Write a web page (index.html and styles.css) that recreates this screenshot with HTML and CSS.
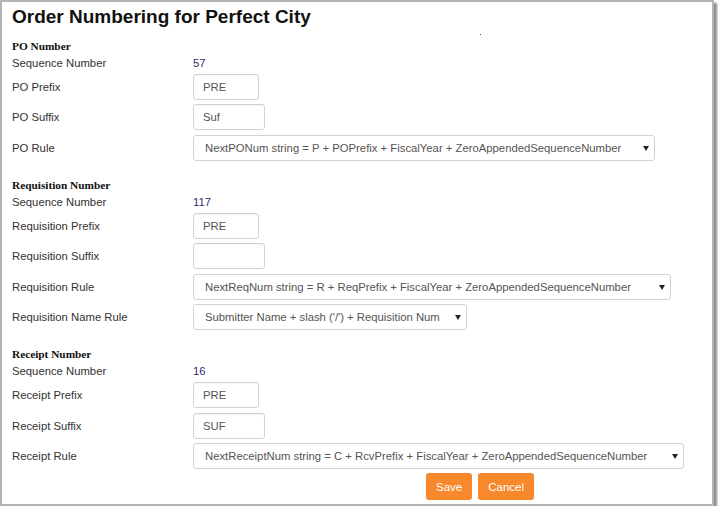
FILE: index.html
```html
<!DOCTYPE html>
<html lang="en">
<head>
    <meta charset="UTF-8">
    <title>Order Numbering</title>
    <link rel="stylesheet" href="styles.css">
</head>
<body>
    <div class="frame">
        <h1 class="title">Order Numbering for Perfect City</h1>
        <span class="speck"></span>

        <div class="section">
            <h2 class="section-title">PO Number</h2>
            <div class="row seq">
                <span class="label">Sequence Number</span>
                <span class="value">57</span>
            </div>
            <div class="row">
                <span class="label">PO Prefix</span>
                <input class="field short" type="text" value="PRE">
            </div>
            <div class="row">
                <span class="label">PO Suffix</span>
                <input class="field" type="text" value="Suf">
            </div>
            <div class="row">
                <span class="label">PO Rule</span>
                <div class="select-wrap" style="width: 462px;">
                    <select class="select">
                        <option>NextPONum string = P + POPrefix + FiscalYear + ZeroAppendedSequenceNumber</option>
                    </select>
                    <svg class="caret" width="6" height="5" viewBox="0 0 6 5"><polygon points="0,0 6,0 3,5" fill="#222"/></svg>
                </div>
            </div>
        </div>

        <div class="section">
            <h2 class="section-title">Requisition Number</h2>
            <div class="row seq">
                <span class="label">Sequence Number</span>
                <span class="value">117</span>
            </div>
            <div class="row">
                <span class="label">Requisition Prefix</span>
                <input class="field short" type="text" value="PRE">
            </div>
            <div class="row">
                <span class="label">Requisition Suffix</span>
                <input class="field" type="text" value="">
            </div>
            <div class="row">
                <span class="label">Requisition Rule</span>
                <div class="select-wrap" style="width: 478px;">
                    <select class="select">
                        <option>NextReqNum string = R + ReqPrefix + FiscalYear + ZeroAppendedSequenceNumber</option>
                    </select>
                    <svg class="caret" width="6" height="5" viewBox="0 0 6 5"><polygon points="0,0 6,0 3,5" fill="#222"/></svg>
                </div>
            </div>
            <div class="row">
                <span class="label">Requisition Name Rule</span>
                <div class="select-wrap" style="width: 274px;">
                    <select class="select">
                        <option>Submitter Name + slash ('/') + Requisition Num</option>
                    </select>
                    <svg class="caret" width="6" height="5" viewBox="0 0 6 5"><polygon points="0,0 6,0 3,5" fill="#222"/></svg>
                </div>
            </div>
        </div>

        <div class="section">
            <h2 class="section-title">Receipt Number</h2>
            <div class="row seq">
                <span class="label">Sequence Number</span>
                <span class="value">16</span>
            </div>
            <div class="row">
                <span class="label">Receipt Prefix</span>
                <input class="field short" type="text" value="PRE">
            </div>
            <div class="row">
                <span class="label">Receipt Suffix</span>
                <input class="field" type="text" value="SUF">
            </div>
            <div class="row">
                <span class="label">Receipt Rule</span>
                <div class="select-wrap" style="width: 491px;">
                    <select class="select">
                        <option>NextReceiptNum string = C + RcvPrefix + FiscalYear + ZeroAppendedSequenceNumber</option>
                    </select>
                    <svg class="caret" width="6" height="5" viewBox="0 0 6 5"><polygon points="0,0 6,0 3,5" fill="#222"/></svg>
                </div>
            </div>
        </div>

        <div class="actions">
            <button class="btn">Save</button>
            <button class="btn">Cancel</button>
        </div>
    </div>
</body>
</html>
```

FILE: styles.css
```css
body {
    margin: 0;
    background: #fff;
    font-family: "Liberation Sans", Arial, sans-serif;
    font-size: 11.3px;
    color: #333;
}
.frame {
    position: relative;
    box-sizing: border-box;
    width: 714px;
    height: 506px;
    border: 2px solid #b4b4b4;
    box-shadow: 3px 3px 2px rgba(0, 0, 0, 0.45);
    padding: 0 10px;
    background: #fff;
}
.title {
    margin: 0;
    padding-top: 3px;
    font-size: 19px;
    line-height: 24px;
    font-weight: bold;
    color: #111;
}
.speck {
    position: absolute;
    left: 478px;
    top: 32px;
    width: 1px;
    height: 1px;
    background: #555;
}
.section {
    margin-top: 9px;
}
.section + .section {
    margin-top: 16.5px;
}
.section-title {
    margin: 0;
    font-family: "Liberation Serif", "Times New Roman", serif;
    font-size: 11.3px;
    font-weight: bold;
    line-height: 17px;
    color: #111;
}
.row {
    display: flex;
    align-items: center;
    height: 26px;
    margin-bottom: 4.3px;
}
.row.seq {
    height: 15px;
    margin-bottom: 4px;
}
.label {
    width: 181px;
    flex: none;
    color: #333;
}
.value {
    color: #2f2f6c;
}
.field {
    box-sizing: border-box;
    width: 72px;
    height: 26px;
    padding: 0 9px;
    border: 1px solid #d2d2d2;
    border-radius: 3px;
    box-shadow: inset 0 1px 1px rgba(0, 0, 0, 0.04);
    font-family: inherit;
    font-size: 11.3px;
    color: #555;
    background: #fff;
}
.field.short {
    width: 66px;
}
.select-wrap {
    position: relative;
    height: 26px;
}
.select {
    box-sizing: border-box;
    width: 100%;
    height: 26px;
    padding: 0 20px 0 11px;
    border: 1px solid #d2d2d2;
    border-radius: 3px;
    background: #fff;
    font-family: inherit;
    font-size: 11.3px;
    color: #555;
    appearance: none;
    -webkit-appearance: none;
}
.caret {
    position: absolute;
    right: 6px;
    top: 11px;
}
.actions {
    display: flex;
    gap: 6px;
    margin-left: 414px;
}
.btn {
    height: 27px;
    padding: 0 10px;
    border: none;
    border-radius: 3px;
    background: #f7882b;
    color: #fff;
    font-family: inherit;
    font-size: 11.5px;
}
```
